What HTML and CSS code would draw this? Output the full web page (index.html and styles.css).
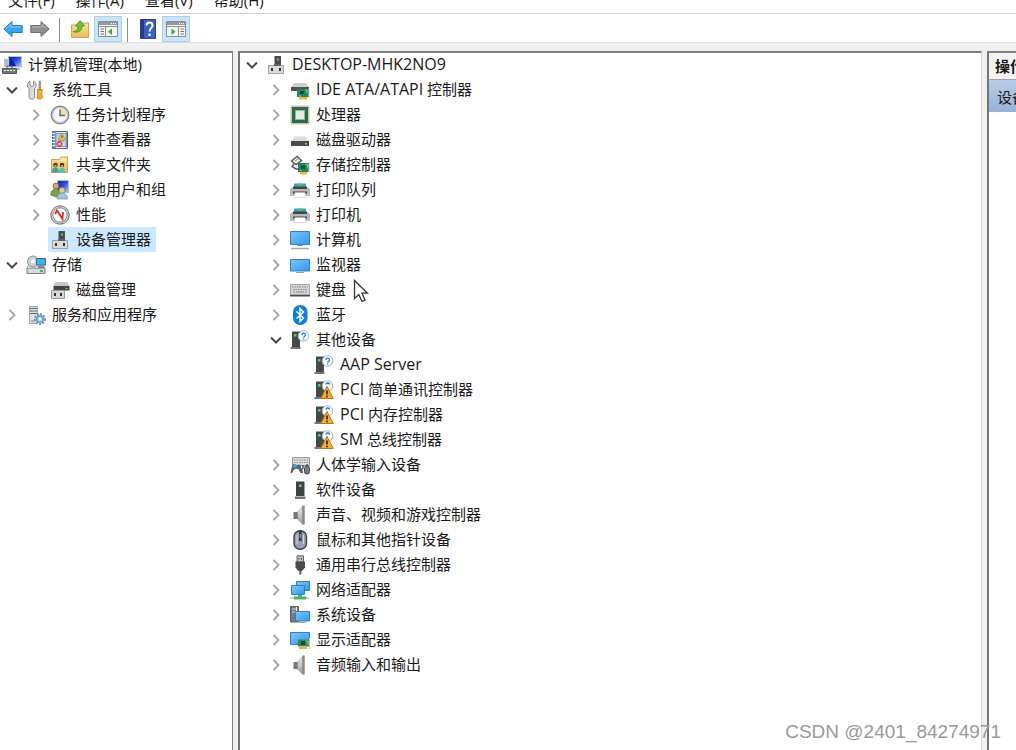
FILE: index.html
```html
<!DOCTYPE html>
<html lang="zh-CN">
<head>
  <meta charset="UTF-8">
  <meta name="viewport" content="width=device-width, initial-scale=1.0">
  <title>计算机管理</title>
  <link rel="stylesheet" href="styles.css">
</head>
<body>
  <!-- 图标库 -->
  <svg class="sprite" aria-hidden="true">
    <defs>
      <linearGradient id="gScreen" x1="0" y1="0" x2="1" y2="1">
        <stop offset="0" stop-color="#7cc6fb"/><stop offset="1" stop-color="#3397ea"/>
      </linearGradient>
      <linearGradient id="gMetal" x1="0" y1="0" x2="0" y2="1">
        <stop offset="0" stop-color="#eeeeee"/><stop offset="1" stop-color="#9c9c9c"/>
      </linearGradient>
      <linearGradient id="gNavy" x1="0" y1="0" x2="1" y2="1">
        <stop offset="0" stop-color="#0b1fa0"/><stop offset=".5" stop-color="#2b4fe0"/><stop offset="1" stop-color="#b9d0fa"/>
      </linearGradient>
      <linearGradient id="gFolder" x1="0" y1="0" x2="0" y2="1">
        <stop offset="0" stop-color="#fbe3a0"/><stop offset="1" stop-color="#e9bb58"/>
      </linearGradient>
    </defs>
    <symbol id="right" viewBox="0 0 12 12"><path d="M3.5 1l5 5-5 5" fill="none" stroke="#a3a3a3" stroke-width="1.8"/></symbol>
    <symbol id="down" viewBox="0 0 12 12"><path d="M1 3.5l5 5 5-5" fill="none" stroke="#4a4a4a" stroke-width="2"/></symbol>

    <symbol id="back" viewBox="0 0 20 20"><path d="M.8 10L9 2.500v4h10.200v7H9v4z" fill="#39a5ea" stroke="#2b7dbd"/><path d="M3 10l5-4.500v2.500h10" fill="none" stroke="#8ed2f8"/></symbol>
    <symbol id="forward" viewBox="0 0 20 20"><path d="M19.200 10L11 2.500v4H.8v7H11v4z" fill="#909090" stroke="#6e6e6e"/><path d="M2 8h10V5.500l4 3.500" fill="none" stroke="#b9b9b9"/></symbol>
    <symbol id="up" viewBox="0 0 20 20"><path d="M1.500 6h6l1.500-2h9.500v14.500h-17z" fill="url(#gFolder)" stroke="#c9a252"/><path d="M3 12.500c4 0 5-2 5-5.500H5.500L10 1.500 14.500 7H12c0 5-4 7.500-9 5.500z" fill="#6fc32e" stroke="#418c1a" stroke-width=".8"/></symbol>
    <symbol id="paneLeft" viewBox="0 0 20 20"><path d="M.5 2.500h19v15H.5z" fill="#f4f4f4" stroke="#868d93"/><path d="M1 3h18v3H1z" fill="#929aa0"/><path d="M13 4.500h1m1 0h1m1 0h1" stroke="#fff"/><path d="M1 7.500h18M7.500 7v10" stroke="#868d93"/><path d="M2.500 10h3.500M2.500 12.500h3.500M2.500 15h3.500" stroke="#6f777f"/><path d="M14 9.500v6.500l-4-3.250z" fill="#43a536"/></symbol>
    <symbol id="paneRight" viewBox="0 0 20 20"><path d="M.5 2.500h19v15H.5z" fill="#f4f4f4" stroke="#868d93"/><path d="M1 3h18v3H1z" fill="#929aa0"/><path d="M13 4.500h1m1 0h1m1 0h1" stroke="#fff"/><path d="M1 7.500h18M12.500 7v10" stroke="#868d93"/><path d="M14.500 10H18M14.500 12.500H18M14.500 15H18" stroke="#6f777f"/><path d="M5.500 9.500v6.500l4-3.250z" fill="#43a536"/></symbol>
    <symbol id="help" viewBox="0 0 20 20"><path d="M2.500.5h15v19h-15z" fill="#3e5fc4" stroke="#29408f"/><path d="M3 1h3v18H3z" fill="#263c8b"/><path d="M8.500 6.500c0-4 6-4 6 0 0 2.500-3 2.500-3 6" fill="none" stroke="#fff" stroke-width="2"/><circle cx="11.500" cy="15.800" r="1.300" fill="#fff"/></symbol>

    <symbol id="mmc" viewBox="0 0 20 20"><path d="M6.500 1.500h13v10.500h-13z" fill="url(#gNavy)" stroke="#bfc5cf"/><path d="M6 13h12v2H6z" fill="#b9bbb8"/><path d="M2 4h4v8H2z" fill="#b7bcc2"/><path d="M7 11l2-8 5 8z" fill="#0b1fa0"/><path d="M.5 13.500h14v5H.5z" fill="#72787c" stroke="#53585c"/><path d="M2 15.500h2m1 0h2m1 0h2m1 0h2" stroke="#eee"/><path d="M5 13v-2h5v2" fill="none" stroke="#5d6266"/></symbol>
    <symbol id="tools" viewBox="0 0 20 20"><path d="M4 1.200v4.300l1.800 1.300 1.800-1.300V1.200c3.600 2 3 6 .9 7.300v9c0 2.200-5.400 2.200-5.400 0v-9C.8 7.200.6 3.200 4 1.200z" fill="#dcdcdc" stroke="#8b8b8b"/><path d="M13 1h1.500v9H13z" fill="#a8a8a8" stroke="#777" stroke-width=".6"/><path d="M11 9.500h5.500l-.8 3 .8 5c0 2-5.500 2-5.500 0l.8-5z" fill="#f5af27" stroke="#bd7d12" stroke-width=".8"/></symbol>
    <symbol id="clock" viewBox="0 0 20 20"><circle cx="10" cy="10" r="9" fill="#b2b2b2" stroke="#7c7c7c"/><circle cx="10" cy="10" r="7.200" fill="#f2f4f6" stroke="#d5d5d5"/><path d="M10 10V3.500a6.500 6.500 0 0 1 6.500 6.500z" fill="#f7dc96"/><path d="M10 4.500V10.500h5" fill="none" stroke="#5e6e87" stroke-width="1.500"/></symbol>
    <symbol id="event" viewBox="0 0 20 20"><path d="M2.500 1.500h15v17h-15z" fill="#7d9bc4" stroke="#4d648c"/><path d="M6 2.500h10.500M6 17.500h10.500" stroke="#dfe9f5"/><path d="M6.500 4h9v12h-9z" fill="#c9d8ec"/><path d="M8 6h6m-6 2.500h6m-6 2.500h6" stroke="#8095b5"/><path d="M2 3.500h3m-3 3h3m-3 3h3m-3 3h3m-3 3h3" stroke="#eef3f9"/><path d="M12 3.500l3.500 6.500h-7z" fill="#f4cb26" stroke="#ab8510" stroke-width=".6"/><path d="M12 5.500v2.500" stroke="#4e400c"/><circle cx="9.500" cy="14" r="3" fill="#d7413a"/><path d="M8 12.500l3 3m0-3l-3 3" stroke="#fff"/></symbol>
    <symbol id="share" viewBox="0 0 20 20"><path d="M1.500 4.500h8l1.500-2.500h6.500v15.500h-16z" fill="url(#gFolder)" stroke="#cda557"/><path d="M11 5h6" stroke="#fff3c7"/><circle cx="5.500" cy="10" r="2.300" fill="#5d3a22"/><path d="M2 17.500c0-7 7-7 7 0z" fill="#3fa6a0"/><circle cx="12" cy="10" r="2.300" fill="#4d3020"/><path d="M8.500 18c0-7 7-7 7 0z" fill="#6abbb5"/><path d="M4.500 11h2m4.500 0h2" stroke="#f0c39c" stroke-width="1.500"/></symbol>
    <symbol id="users" viewBox="0 0 20 20"><path d="M7.500.5h11v12h-11z" fill="url(#gNavy)" stroke="#b6bcc8"/><circle cx="6" cy="6" r="3" fill="#d5a76c" stroke="#755126" stroke-width=".7"/><path d="M.8 15c0-8 9.500-8 9.500 0l-4 2z" fill="#76a24f" stroke="#4f7533" stroke-width=".7"/><circle cx="12" cy="10.500" r="3" fill="#eac69c" stroke="#a47642" stroke-width=".7"/><path d="M7 19c0-8 10.500-8 10.500 0z" fill="#9fc5df" stroke="#6592b5" stroke-width=".7"/></symbol>
    <symbol id="perf" viewBox="0 0 20 20"><circle cx="10" cy="10" r="9.200" fill="#d2d2d2" stroke="#6d6d6d"/><circle cx="10" cy="10" r="7.200" fill="#fff" stroke="#8b8b8b"/><path d="M5 9l2-3.500L12.500 14l.5-7M6 6.500l3 .5" fill="none" stroke="#d22f26" stroke-width="1.800"/></symbol>
    <symbol id="device" viewBox="0 0 20 20"><path d="M8.500 1h6.500v11H8.500z" fill="#4c4c4c"/><path d="M11 3.500h2v2h-2z" fill="#4ad15b"/><path d="M2.500 10.500h15v8h-15z" fill="#dadada" stroke="#a0a0a0"/><path d="M8 11h7V9H8z" fill="#626262"/><path d="M5 13h2v3H5zM13 13h2v3h-2z" fill="#333"/></symbol>
    <symbol id="storage" viewBox="0 0 20 20"><path d="M1 13h18v5.500H1z" fill="#d7d9da" stroke="#767c80"/><path d="M2.500 10h15l1.500 3H1z" fill="#f0f1f1" stroke="#a0a5a8"/><circle cx="7" cy="6.500" r="5.500" fill="#c9d0d4" stroke="#8b9296"/><circle cx="7" cy="6.500" r="2" fill="#fff"/><path d="M10.500 3.500h9v6.500h-9z" fill="#48ace5" stroke="#2673a2"/><path d="M12 12h6" stroke="#5b6266" stroke-width="1.500"/><path d="M14 15h3v2h-3z" fill="#62a852"/></symbol>
    <symbol id="diskmgr" viewBox="0 0 20 20"><path d="M5.500 2h12l2 4h-16z" fill="#c4c4c4"/><path d="M3.500 6h16v4.500h-16z" fill="#444"/><path d="M15.500 8h2v1h-2z" fill="#65dc6c"/><path d="M1.500 10.500h13v8h-13z" fill="#d7d7d7" stroke="#999"/><path d="M4 13h2v3H4zM10 13h2v3h-2z" fill="#333"/></symbol>
    <symbol id="services" viewBox="0 0 20 20"><path d="M3.500 1.500h8v17h-8z" fill="#dce1e3" stroke="#9fa7ab"/><path d="M4 3.500h7M4 6h7M4 8.500h7" stroke="#60696d" stroke-width="1.200"/><path d="M5 16h4" stroke="#4dac57"/><circle cx="14" cy="14" r="5" fill="none" stroke="#7197b8" stroke-width="2" stroke-dasharray="2 1.300"/><circle cx="14" cy="14" r="3.300" fill="#b9d3e8" stroke="#6994b9" stroke-width="1.500"/><circle cx="14" cy="14" r="1.200" fill="#fff"/></symbol>

    <symbol id="ide" viewBox="0 0 20 20"><path d="M4 3h12l3 4H1z" fill="#d0d0d0"/><path d="M1 7h18v4H1z" fill="#535353"/><path d="M7 9h12v8H7z" fill="#24845c"/><path d="M19 8v10" stroke="#c9c9c9"/><path d="M10 11h4v3h-4z" fill="#104b35"/><path d="M9 16h2m4-6h2v3" stroke="#8ad8a3" fill="none"/><path d="M9 17h8v2.500H9z" fill="#edb52f"/></symbol>
    <symbol id="cpu" viewBox="0 0 20 20"><path d="M1.500 1.500h17v17h-17z" fill="none" stroke="#8f8b58" stroke-width="2" stroke-dasharray="1 1"/><path d="M2 2h16v16H2z" fill="#286a4b"/><path d="M5.500 5.500h9v9h-9z" fill="#e6e8e4" stroke="#9db2a4"/></symbol>
    <symbol id="disk" viewBox="0 0 20 20"><path d="M5 6.500h10l4 4.500H1z" fill="#dcdcdc"/><path d="M1 11h18v5H1z" fill="#4b4b4b"/><path d="M15 13h2v1.500h-2z" fill="#73e579"/></symbol>
    <symbol id="storctl" viewBox="0 0 20 20"><path d="M1.500 6L7 1.500l4.500 4L6 9.500zM4 9l-2 2.500 4 2.500h5" fill="#f2f2f2" stroke="#5c5c5c" stroke-width="1.500"/><path d="M5 6l3-2" stroke="#777"/><path d="M8 8h11v9H8z" fill="#24845c"/><path d="M19 7v11" stroke="#c9c9c9"/><path d="M11 10.500h4v3.500h-4z" fill="#104b35"/><path d="M9.500 15.500h2m4-6h2v3" stroke="#8ad8a3" fill="none"/><path d="M10 17h7v2.500h-7z" fill="#edb52f"/></symbol>
    <symbol id="printer" viewBox="0 0 20 20"><path d="M4 3.500h12V8H4z" fill="#3f9ecc"/><path d="M8 3.500h5v2H8z" fill="#46c56d"/><path d="M3 7h14l3 2v7H0V9z" fill="#b9b9b9"/><path d="M3 6.500h14V9H3z" fill="#454545"/><path d="M3 11.500h14v2H3z" fill="#454545"/><path d="M5 12.500h10l1 5H4z" fill="#fff" stroke="#bcbcbc" stroke-width=".6"/></symbol>
    <symbol id="computer" viewBox="0 0 20 20"><path d="M.5 1.500h19v13H.5z" fill="url(#gScreen)" stroke="#3582ba"/><path d="M7 15.500h6" stroke="#7c99aa"/><path d="M1 18.500h18" stroke="#a3abb0" stroke-width="1.500"/></symbol>
    <symbol id="monitor" viewBox="0 0 20 20"><path d="M.5 4.500h19V16H.5z" fill="url(#gScreen)" stroke="#3582ba"/><path d="M6 17.500h8" stroke="#8ba7b8"/></symbol>
    <symbol id="keyboard" viewBox="0 0 20 20"><path d="M.5 4.500h19v10H.5z" fill="#d3d6d8" stroke="#a5a9ac"/><path d="M0 15h20v1.500H0z" fill="#4c4c4c"/><path d="M2 7h16M3 9.500h14" stroke="#858b8f" stroke-dasharray="1.500 1"/><path d="M3 12h2m1 0h8m1 0h2" stroke="#858b8f"/></symbol>
    <symbol id="bluetooth" viewBox="0 0 20 20"><rect x="3" y="0" width="14.500" height="20" rx="7" fill="#0c7ee8"/><path d="M6.500 6.500l7 6.500-3.500 3.500V3.500L13.500 7l-7 6.500" fill="none" stroke="#fff" stroke-width="1.500"/></symbol>
    <symbol id="unknown" viewBox="0 0 20 20"><path d="M2 1.500h8V17H2z" fill="#484848"/><path d="M.5 17h10v2H.5z" fill="#777"/><path d="M4 4h2.500v2.500H4z" fill="#49d965"/><circle cx="13.500" cy="6" r="5.300" fill="#f5f9fc" stroke="#a5b6c2"/><path d="M12 5c0-2.500 3.500-2.500 3.500 0 0 1.300-1.800 1.200-1.800 2.500M13.700 8.500v1.200" fill="none" stroke="#2878b8" stroke-width="1.300"/></symbol>
    <symbol id="warn" viewBox="0 0 20 20"><path d="M2 1.500h8V17H2z" fill="#484848"/><path d="M.5 17h10v2H.5z" fill="#777"/><path d="M4 4h2.500v2.500H4z" fill="#49d965"/><circle cx="13.500" cy="6" r="5.300" fill="#f5f9fc" stroke="#a5b6c2"/><path d="M12 4.500c0-2 3.500-2 3.500 0" fill="none" stroke="#2878b8" stroke-width="1.300"/><path d="M13 6.500l6.300 12H6.700z" fill="#f6ad2c" stroke="#b3741a"/><path d="M13 10.500v4m0 1.200v1.500" stroke="#2d230f" stroke-width="1.700"/></symbol>
    <symbol id="hid" viewBox="0 0 20 20"><path d="M2.500 2.500h17v8h-17z" fill="#d9dde0" stroke="#94999d"/><path d="M4 5h14M4 7.500h14" stroke="#848b8f" stroke-dasharray="1.500 1"/><path d="M.5 18l1.600-7c1-3 3-2 3.500-1h2c2-1 3 0 3.400 2l.8 6c-2 1-2-3-3.800-4H5c-2 1-2 5-4.500 4z" fill="#55656f"/><path d="M13 17.500c-2 0-1.500-4 0-4.500v-3M17 9v3" fill="none" stroke="#52565a" stroke-width="1.500"/><rect x="14.500" y="11" width="5" height="8" rx="2.300" fill="#777f86" stroke="#45494d"/><circle cx="5" cy="11" r="2" fill="#45a7df"/></symbol>
    <symbol id="soft" viewBox="0 0 20 20"><path d="M6 1.500h8.500V16H6z" fill="#414141"/><path d="M5 16.500h10.500V19H5z" fill="#777"/><path d="M9 4.500h2.500V7H9z" fill="#54db6e"/></symbol>
    <symbol id="sound" viewBox="0 0 20 20"><path d="M3.500 7H8v7H3.500z" fill="#777"/><path d="M7.500 7L13 1.500v18L7.500 14z" fill="url(#gMetal)" stroke="#858585" stroke-width=".6"/><path d="M13.500.5v19" stroke="#8a8a8a" stroke-width="2.500"/></symbol>
    <symbol id="mouse" viewBox="0 0 20 20"><rect x="4" y=".7" width="12.500" height="18.600" rx="6" fill="#96a0af" stroke="#3c4148" stroke-width="1.400"/><path d="M7 5v9m6.500-9v9" stroke="#d0d7e0"/><path d="M10.300 1v10" stroke="#32363c" stroke-width="2.500"/><path d="M10.300 4v4" stroke="#9db4cc"/></symbol>
    <symbol id="usb" viewBox="0 0 20 20"><path d="M7 .8h6.500V7H7z" fill="#c1c1c1" stroke="#666"/><path d="M9 3v1.500m2.500-1.500v1.500" stroke="#333"/><path d="M5.500 6.500H15v6L12 16H8.500l-3-3.500z" fill="#4a4a4a"/><path d="M10.300 15v4.500" stroke="#555" stroke-width="2"/></symbol>
    <symbol id="network" viewBox="0 0 20 20"><path d="M6.500 1.500h13v9h-13z" fill="url(#gScreen)" stroke="#347eb3"/><path d="M1.500 5.500h13v9h-13z" fill="url(#gScreen)" stroke="#347eb3"/><path d="M8 15h4v1.500h4v3H4v-3h4z" fill="#49b561"/><path d="M0 18h4m12 0h3" stroke="#c0d9c6" stroke-width="2"/></symbol>
    <symbol id="system" viewBox="0 0 20 20"><path d="M.5 1.500h8V17h-8z" fill="#737c80" stroke="#596064"/><path d="M2 4h5M2 7h4" stroke="#d2d7d9"/><path d="M6.500 2v4" stroke="#e9e9e9"/><path d="M5.500 6.500h14v9.500h-14z" fill="url(#gScreen)" stroke="#347eb3"/><path d="M9 17.500h7" stroke="#8ba7b8"/></symbol>
    <symbol id="display" viewBox="0 0 20 20"><path d="M.5 2.500h19v12H.5z" fill="url(#gScreen)" stroke="#3582ba"/><path d="M8 9.500h11v7H8z" fill="#398454"/><path d="M11 11h4v4h-4z" fill="#174831"/><path d="M16 11h2v4" stroke="#b8c968" fill="none"/><path d="M9 17h8v2H9z" fill="#efad2c"/><path d="M19.500 8v11" stroke="#c5c5c5"/></symbol>
  </svg>

  <nav class="menubar">
    <button type="button">文件(F)</button>
    <button type="button">操作(A)</button>
    <button type="button">查看(V)</button>
    <button type="button">帮助(H)</button>
  </nav>

  <div class="toolbar">
    <button type="button" aria-label="后退"><svg><use href="#back"/></svg></button>
    <button type="button" aria-label="前进"><svg><use href="#forward"/></svg></button>
    <span class="sep"></span>
    <button type="button" aria-label="向上"><svg><use href="#up"/></svg></button>
    <button type="button" class="on" aria-label="显示控制台树"><svg><use href="#paneLeft"/></svg></button>
    <span class="sep"></span>
    <button type="button" aria-label="帮助"><svg><use href="#help"/></svg></button>
    <button type="button" class="on" aria-label="显示操作窗格"><svg><use href="#paneRight"/></svg></button>
  </div>

  <div class="panes">
    <aside class="pane side">
      <ul class="tree">
        <li>
          <div class="row"><button type="button" class="item"><svg><use href="#mmc"/></svg>计算机管理(本地)</button></div>
          <ul>
            <li>
              <div class="row"><button type="button" class="toggle" aria-label="折叠"><svg><use href="#down"/></svg></button><button type="button" class="item"><svg><use href="#tools"/></svg>系统工具</button></div>
              <ul class="sub">
                <li class="row"><button type="button" class="toggle" aria-label="展开"><svg><use href="#right"/></svg></button><button type="button" class="item"><svg><use href="#clock"/></svg>任务计划程序</button></li>
                <li class="row"><button type="button" class="toggle" aria-label="展开"><svg><use href="#right"/></svg></button><button type="button" class="item"><svg><use href="#event"/></svg>事件查看器</button></li>
                <li class="row"><button type="button" class="toggle" aria-label="展开"><svg><use href="#right"/></svg></button><button type="button" class="item"><svg><use href="#share"/></svg>共享文件夹</button></li>
                <li class="row"><button type="button" class="toggle" aria-label="展开"><svg><use href="#right"/></svg></button><button type="button" class="item"><svg><use href="#users"/></svg>本地用户和组</button></li>
                <li class="row"><button type="button" class="toggle" aria-label="展开"><svg><use href="#right"/></svg></button><button type="button" class="item"><svg><use href="#perf"/></svg>性能</button></li>
                <li class="row leaf"><button type="button" class="item selected"><svg><use href="#device"/></svg>设备管理器</button></li>
              </ul>
            </li>
            <li>
              <div class="row"><button type="button" class="toggle" aria-label="折叠"><svg><use href="#down"/></svg></button><button type="button" class="item"><svg><use href="#storage"/></svg>存储</button></div>
              <ul class="sub">
                <li class="row leaf"><button type="button" class="item"><svg><use href="#diskmgr"/></svg>磁盘管理</button></li>
              </ul>
            </li>
            <li class="row"><button type="button" class="toggle" aria-label="展开"><svg><use href="#right"/></svg></button><button type="button" class="item"><svg><use href="#services"/></svg>服务和应用程序</button></li>
          </ul>
        </li>
      </ul>
    </aside>

    <main class="pane devices">
      <ul class="tree">
        <li>
          <div class="row"><button type="button" class="toggle" aria-label="折叠"><svg><use href="#down"/></svg></button><button type="button" class="item"><svg><use href="#device"/></svg><span class="latin">DESKTOP-MHK2NO9</span></button></div>
          <ul class="sub">
            <li class="row"><button type="button" class="toggle" aria-label="展开"><svg><use href="#right"/></svg></button><button type="button" class="item"><svg><use href="#ide"/></svg><span><span class="latin">IDE ATA/ATAPI</span> 控制器</span></button></li>
            <li class="row"><button type="button" class="toggle" aria-label="展开"><svg><use href="#right"/></svg></button><button type="button" class="item"><svg><use href="#cpu"/></svg>处理器</button></li>
            <li class="row"><button type="button" class="toggle" aria-label="展开"><svg><use href="#right"/></svg></button><button type="button" class="item"><svg><use href="#disk"/></svg>磁盘驱动器</button></li>
            <li class="row"><button type="button" class="toggle" aria-label="展开"><svg><use href="#right"/></svg></button><button type="button" class="item"><svg><use href="#storctl"/></svg>存储控制器</button></li>
            <li class="row"><button type="button" class="toggle" aria-label="展开"><svg><use href="#right"/></svg></button><button type="button" class="item"><svg><use href="#printer"/></svg>打印队列</button></li>
            <li class="row"><button type="button" class="toggle" aria-label="展开"><svg><use href="#right"/></svg></button><button type="button" class="item"><svg><use href="#printer"/></svg>打印机</button></li>
            <li class="row"><button type="button" class="toggle" aria-label="展开"><svg><use href="#right"/></svg></button><button type="button" class="item"><svg><use href="#computer"/></svg>计算机</button></li>
            <li class="row"><button type="button" class="toggle" aria-label="展开"><svg><use href="#right"/></svg></button><button type="button" class="item"><svg><use href="#monitor"/></svg>监视器</button></li>
            <li class="row"><button type="button" class="toggle" aria-label="展开"><svg><use href="#right"/></svg></button><button type="button" class="item"><svg><use href="#keyboard"/></svg>键盘</button></li>
            <li class="row"><button type="button" class="toggle" aria-label="展开"><svg><use href="#right"/></svg></button><button type="button" class="item"><svg><use href="#bluetooth"/></svg>蓝牙</button></li>
            <li>
              <div class="row"><button type="button" class="toggle" aria-label="折叠"><svg><use href="#down"/></svg></button><button type="button" class="item"><svg><use href="#unknown"/></svg>其他设备</button></div>
              <ul>
                <li class="row deep"><button type="button" class="item"><svg><use href="#unknown"/></svg><span class="latin">AAP Server</span></button></li>
                <li class="row deep"><button type="button" class="item"><svg><use href="#warn"/></svg><span><span class="latin">PCI</span> 简单通讯控制器</span></button></li>
                <li class="row deep"><button type="button" class="item"><svg><use href="#warn"/></svg><span><span class="latin">PCI</span> 内存控制器</span></button></li>
                <li class="row deep"><button type="button" class="item"><svg><use href="#warn"/></svg><span><span class="latin">SM</span> 总线控制器</span></button></li>
              </ul>
            </li>
            <li class="row"><button type="button" class="toggle" aria-label="展开"><svg><use href="#right"/></svg></button><button type="button" class="item"><svg><use href="#hid"/></svg>人体学输入设备</button></li>
            <li class="row"><button type="button" class="toggle" aria-label="展开"><svg><use href="#right"/></svg></button><button type="button" class="item"><svg><use href="#soft"/></svg>软件设备</button></li>
            <li class="row"><button type="button" class="toggle" aria-label="展开"><svg><use href="#right"/></svg></button><button type="button" class="item"><svg><use href="#sound"/></svg>声音、视频和游戏控制器</button></li>
            <li class="row"><button type="button" class="toggle" aria-label="展开"><svg><use href="#right"/></svg></button><button type="button" class="item"><svg><use href="#mouse"/></svg>鼠标和其他指针设备</button></li>
            <li class="row"><button type="button" class="toggle" aria-label="展开"><svg><use href="#right"/></svg></button><button type="button" class="item"><svg><use href="#usb"/></svg>通用串行总线控制器</button></li>
            <li class="row"><button type="button" class="toggle" aria-label="展开"><svg><use href="#right"/></svg></button><button type="button" class="item"><svg><use href="#network"/></svg>网络适配器</button></li>
            <li class="row"><button type="button" class="toggle" aria-label="展开"><svg><use href="#right"/></svg></button><button type="button" class="item"><svg><use href="#system"/></svg>系统设备</button></li>
            <li class="row"><button type="button" class="toggle" aria-label="展开"><svg><use href="#right"/></svg></button><button type="button" class="item"><svg><use href="#display"/></svg>显示适配器</button></li>
            <li class="row"><button type="button" class="toggle" aria-label="展开"><svg><use href="#right"/></svg></button><button type="button" class="item"><svg><use href="#sound"/></svg>音频输入和输出</button></li>
          </ul>
        </li>
      </ul>
      <svg class="pointer" viewBox="0 0 16 24"><path d="M1.500 1.500v18l4.300-4 3.200 7 3-1.300-3-7h5.500z" fill="#fff" stroke="#333" stroke-width="1.300"/></svg>
    </main>

    <aside class="pane actions">
      <h2>操作</h2>
      <button type="button">设备管理器</button>
    </aside>
  </div>

  <div class="watermark">CSDN @2401_84274971</div>
</body>
</html>
```
FILE: styles.css
```css
* {
  margin: 0;
  padding: 0;
  box-sizing: border-box;
}

body {
  position: relative;
  display: flex;
  flex-direction: column;
  height: 100vh;
  overflow: hidden;
  background: #f0f0f0;
  color: #1a1a1a;
  font-family: "Open Sans", "Noto Sans CJK SC", sans-serif;
  font-size: 15px;
}

ul {
  list-style: none;
}

button {
  border: none;
  background: none;
  color: inherit;
  font: inherit;
  white-space: nowrap;
}

.sprite {
  position: absolute;
  width: 0;
  height: 0;
}

/* 菜单栏 */
.menubar {
  display: flex;
  align-items: flex-end;
  gap: 21px;
  height: 14px;
  padding: 0 8px 3px;
  overflow: hidden;
  background: #fff;
  border-bottom: 1px solid #d0d0d0;
}

.menubar button {
  line-height: 20px;
}

/* 工具栏 */
.toolbar {
  display: flex;
  align-items: flex-end;
  height: 29px;
  background: #fff;
  border-bottom: 1px solid #dcdcdc;
}

.toolbar button {
  display: flex;
  align-items: center;
  justify-content: center;
  width: 28px;
  height: 26px;
}

.toolbar button:first-child {
  width: 26px;
}

.toolbar .on {
  background: #cce4f7;
  border: 1px solid #a8d0f0;
}

.toolbar svg {
  width: 20px;
  height: 20px;
}

.sep {
  width: 2px;
  height: 24px;
  margin: 0 5px;
  border-left: 1px solid #8c8c8c;
}

/* 窗格 */
.panes {
  display: flex;
  flex: 1;
  gap: 5px;
  min-height: 0;
  padding-top: 8px;
}

.pane {
  background: #fff;
  border-top: 2px solid #808080;
  overflow: hidden;
}

.side {
  flex: none;
  width: 233px;
  border-right: 1px solid #808080;
}

.devices {
  position: relative;
  flex: 1;
  border-left: 2px solid #747474;
  border-right: 1px solid #d8d8d8;
}

.actions {
  flex: none;
  width: 29px;
  border-left: 2px solid #747474;
}

/* 树形列表 */
.tree {
  margin-top: -1px;
}

.sub {
  padding-left: 24px;
}

.row {
  display: flex;
  height: 25px;
}

.leaf {
  padding-left: 24px;
}

.deep {
  padding-left: 48px;
}

.toggle {
  display: flex;
  align-items: center;
  justify-content: center;
  width: 24px;
}

.toggle svg {
  width: 12px;
  height: 12px;
}

.item {
  display: flex;
  align-items: center;
  gap: 6px;
  padding: 0 5px 0 2px;
  line-height: 25px;
}

.item svg {
  width: 20px;
  height: 20px;
}

.item.selected {
  background: #cce8ff;
}

.latin {
  font-size: 16px;
}

.actions h2 {
  height: 27px;
  padding-left: 6px;
  background: #f3f3f3;
  border-bottom: 1px solid #a0a0a0;
  font-size: 15px;
  line-height: 26px;
  white-space: nowrap;
}

.actions button {
  height: 32px;
  padding: 0 8px;
  background: linear-gradient(#b5cde9, #96b3d6);
}

.pointer {
  position: absolute;
  left: 113px;
  top: 226px;
  width: 16px;
  height: 24px;
}

.watermark {
  position: absolute;
  right: 15px;
  bottom: 6px;
  color: #999;
  font-family: "Liberation Sans", sans-serif;
  font-size: 19px;
  line-height: 24px;
}
```
